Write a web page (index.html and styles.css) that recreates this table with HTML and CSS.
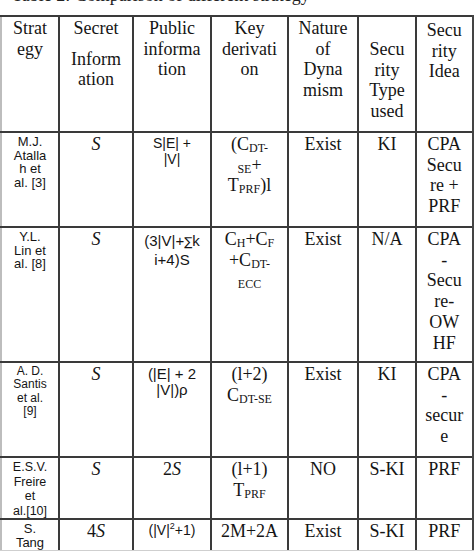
FILE: index.html
```html
<!DOCTYPE html>
<html>
<head>
<meta charset="utf-8">
<link rel="stylesheet" href="styles.css">
</head>
<body>
<div class="caption">Table 2: Comparison of different strategy</div>
<table class="cmp">
  <colgroup>
    <col class="c1"><col class="c2"><col class="c3"><col class="c4"><col class="c5"><col class="c6"><col class="c7">
  </colgroup>
  <tr class="r-head">
    <td>Strat<br>egy</td>
    <td>Secret<div class="gap">Inform<br>ation</div></td>
    <td>Public<br>informa<br>tion</td>
    <td>Key<br>derivati<br>on</td>
    <td>Nature<br>of<br>Dyna<br>mism</td>
    <td class="down">Secu<br>rity<br>Type<br>used</td>
    <td class="down-s">Secu<br>rity<br>Idea</td>
  </tr>
  <tr class="r1">
    <td class="name">M.J.<br>Atalla<br>h et<br>al. [3]</td>
    <td><i>S</i></td>
    <td class="sans s14">S|E| +<br>|V|</td>
    <td>(C<sub>DT-</sub><br><sub>SE</sub>+<br>T<sub>PRF</sub>)l</td>
    <td>Exist</td>
    <td>KI</td>
    <td>CPA<br>Secu<br>re +<br>PRF</td>
  </tr>
  <tr class="r2">
    <td class="name">Y.L.<br>Lin et<br>al. [8]</td>
    <td><i>S</i></td>
    <td class="sans s15">(3|V|+<span class="sig">∑</span>k<br>i+4)S</td>
    <td>C<sub>H</sub>+C<sub>F</sub><br>+C<sub>DT-</sub><br><sub>ECC</sub></td>
    <td>Exist</td>
    <td>N/A</td>
    <td>CPA<br>-<br>Secu<br>re-<br>OW<br>HF</td>
  </tr>
  <tr class="r3">
    <td class="name n12">A. D.<br>Santis<br>et al.<br>[9]</td>
    <td><i>S</i></td>
    <td class="sans s15b">(|E| + 2<br>|V|)ρ</td>
    <td>(l+2)<br>C<sub>DT-SE</sub></td>
    <td>Exist</td>
    <td>KI</td>
    <td>CPA<br>-<br>secur<br>e</td>
  </tr>
  <tr class="r4">
    <td class="name n125">E.S.V.<br>Freire<br>et<br>al.[10]</td>
    <td><i>S</i></td>
    <td>2<i>S</i></td>
    <td>(l+1)<br>T<sub>PRF</sub></td>
    <td>NO</td>
    <td>S-KI</td>
    <td>PRF</td>
  </tr>
  <tr class="r5">
    <td class="name">S.<br>Tang</td>
    <td>4<i>S</i></td>
    <td class="sans s14">(|V|<sup>2</sup>+1)</td>
    <td>2M+2A</td>
    <td>Exist</td>
    <td>S-KI</td>
    <td>PRF</td>
  </tr>
</table>
</body>
</html>
```
FILE: styles.css
```css
html, body {
  margin: 0;
  padding: 0;
  background: #ffffff;
}
body {
  font-family: "Liberation Serif", "Times New Roman", serif;
  font-size: 18px;
  color: #151515;
  overflow: hidden;
}
.caption {
  margin-top: -15px;
  padding-left: 12px;
  line-height: 20.7px;
  height: 21px;
  margin-bottom: 9px;
  color: #222;
  white-space: nowrap;
}
.cmp {
  border-collapse: collapse;
  table-layout: fixed;
  width: 472px;
  line-height: 20.7px;
}
.c1 { width: 58px; }
.c2 { width: 74px; }
.c3 { width: 78px; }
.c4 { width: 77px; }
.c5 { width: 70px; }
.c6 { width: 58px; }
.c7 { width: 57px; }
.cmp td {
  box-sizing: border-box;
  border: 2px solid #3a3a3a;
  text-align: center;
  vertical-align: top;
  padding: 1px 0 0 0;
  overflow: hidden;
}
.cmp td:first-child {
  border-left: 2px solid #bdbdbd;
}
.cmp td:last-child {
  border-right: 3px solid #444;
}
.r5 td {
  border-bottom: 3px solid #cfcfcf;
}
.r-head td { height: 116px; }
.r1 td { height: 95px; }
.r2 td { height: 135px; }
.r3 td { height: 95px; }
.r4 td { height: 61px; }
.r5 td { height: 31px; }
.gap { margin-top: 10px; }
.down { padding-top: 22px !important; }
.down-s { padding-top: 3px !important; }
.cmp sub {
  font-size: 12px;
  line-height: 0;
  vertical-align: -2px;
}
.cmp sup {
  font-size: 9px;
  line-height: 0;
  vertical-align: 6px;
}
.name {
  font-family: "Liberation Sans", Arial, sans-serif;
  font-size: 13px;
  line-height: 13.7px;
  padding-top: 2px !important;
}
.n12 { font-size: 12px; line-height: 13.3px; }
.n125 { font-size: 12.5px; line-height: 14.6px; }
.sans {
  font-family: "Liberation Sans", Arial, sans-serif;
}
.sig {
  font-family: "DejaVu Sans", sans-serif;
  font-size: 12px;
}
.s14 { font-size: 14px; line-height: 16px; padding-top: 2px !important; }
.s15 { font-size: 15px; line-height: 17px; padding-top: 4px !important; }
.s15b { font-size: 15px; line-height: 16px; padding-top: 3px !important; }
```
